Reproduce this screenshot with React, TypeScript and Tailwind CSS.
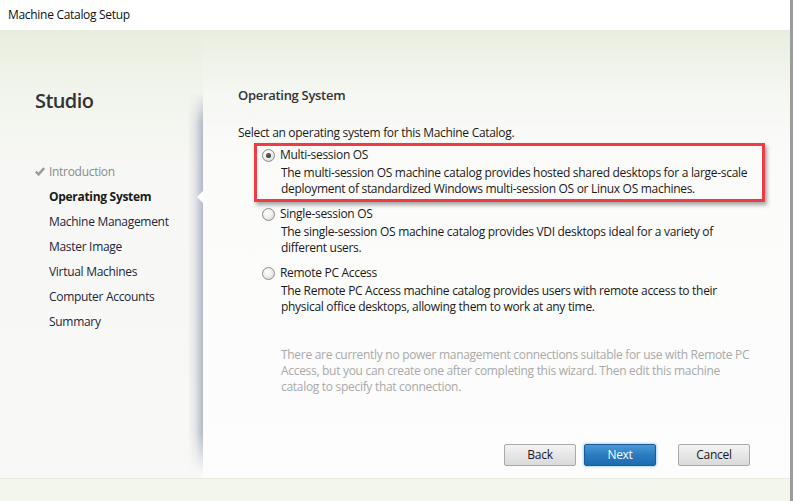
import React from "react";

const font = { fontFamily: '"Open Sans", "Noto Sans", sans-serif', letterSpacing: "-0.3px" };

function Radio({ checked }: { checked?: boolean }) {
  return (
    <span className="flex h-[13px] w-[13px] shrink-0 items-center justify-center rounded-full border border-[#8c8c8c] bg-[radial-gradient(circle_at_40%_35%,#ffffff_0%,#f0f0f0_45%,#cfcfcf_100%)]">
      {checked && (
        <span className="h-[5px] w-[5px] rounded-full bg-[radial-gradient(circle_at_40%_35%,#6a6a6a,#1e1e1e)]" />
      )}
    </span>
  );
}

function Option({
  title,
  lines,
  checked,
  children,
}: {
  title: string;
  lines: string[];
  checked?: boolean;
  children?: React.ReactNode;
}) {
  return (
    <div className="relative ml-[24px]">
      {children}
      <div className="flex h-[16px] items-center gap-[5px]">
        <Radio checked={checked} />
        <span className="whitespace-nowrap text-[12px] leading-[16px] text-[#1a1a1a]">{title}</span>
      </div>
      <div className="mt-[2px] whitespace-nowrap pl-[19px] text-[12px] leading-[16px] text-[#1a1a1a]">
        {lines.map((l) => (
          <div key={l}>{l}</div>
        ))}
      </div>
    </div>
  );
}

function Btn({ label, primary }: { label: string; primary?: boolean }) {
  return primary ? (
    <button className="flex h-[22px] w-[72px] items-center justify-center rounded-[2px] border border-[#1c5c96] bg-[linear-gradient(to_bottom,#4a9ad8,#2a7bc0_50%,#1d6cb0)] text-[12px] text-white shadow-[0_0_3px_#6aaee6]">
      {label}
    </button>
  ) : (
    <button className="flex h-[22px] w-[72px] items-center justify-center rounded-[2px] border border-[#a9a9a9] bg-[linear-gradient(to_bottom,#f4f4f4,#e6e6e6_50%,#dadada)] text-[12px] text-[#1a1a1a]">
      {label}
    </button>
  );
}

export default function App() {
  const steps = [
    "Operating System",
    "Machine Management",
    "Master Image",
    "Virtual Machines",
    "Computer Accounts",
    "Summary",
  ];
  return (
    <div
      className="flex h-[501px] w-[793px] flex-col overflow-hidden border-r-[3px] border-[#9c9c9c] bg-white"
      style={font}
    >
      <div className="flex h-[30px] shrink-0 items-center bg-white pl-[8px] text-[12px] text-[#111]">
        Machine Catalog Setup
      </div>
      <div className="flex flex-1 flex-col bg-[linear-gradient(to_bottom,#e8eedf_0px,#f1f4ec_60px,#f7f8f5_140px,#f8f9f7_100%)]">
        <div className="flex h-[448px]">
          {/* sidebar */}
          <div className="flex w-[203px] shrink-0">
            <div className="w-[188px] pl-[35px] pt-[58px]">
              <div className="text-[20px] font-semibold leading-[26px] tracking-[-0.6px] text-[#333]">Studio</div>
              <div className="ml-[14px] mt-[45px] flex flex-col">
                <div className="-ml-[14px] flex h-[25px] items-center gap-[4px] text-[12px] text-[#8a8a8a]">
                  <svg width="10" height="9" viewBox="0 0 10 9">
                    <path d="M0.8 4.6 L3.6 7.4 L9.2 1" stroke="#9a9a9a" strokeWidth="2.4" fill="none" />
                  </svg>
                  Introduction
                </div>
                {steps.map((s, i) => (
                  <div
                    key={s}
                    className={`flex h-[25px] items-center whitespace-nowrap text-[12px] ${
                      i === 0 ? "font-bold text-[#1a1a1a]" : "text-[#24243a]"
                    }`}
                  >
                    {s}
                  </div>
                ))}
              </div>
            </div>
            <div className="relative w-[15px] pb-[5px] pt-[63px]">
              <div className="h-full w-full bg-[linear-gradient(to_right,rgba(180,185,200,0),rgba(180,185,200,0.35)_50%,#b3b8c6)] [mask-image:linear-gradient(to_bottom,transparent,black_30px,black_calc(100%-40px),transparent)]" />
              <div className="absolute right-0 top-[161px] h-0 w-0 border-y-[6px] border-r-[6px] border-y-transparent border-r-white" />
            </div>
          </div>
          {/* main */}
          <div className="flex flex-1 flex-col bg-[linear-gradient(to_bottom,rgba(255,255,255,0)_0px,rgba(255,255,255,0.5)_120px,rgba(255,255,255,0.6)_100%)] pb-[12px] pl-[35px] pr-[40px] pt-[57px]">
            <div className="text-[13px] font-semibold leading-[16px] text-[#333]">Operating System</div>
            <div className="mt-[22px] whitespace-nowrap text-[12px] leading-[16px] text-[#1a1a1a]">
              Select an operating system for this Machine Catalog.
            </div>
            <div className="mt-[6px]">
              <Option
                checked
                title="Multi-session OS"
                lines={[
                  "The multi-session OS machine catalog provides hosted shared desktops for a large-scale",
                  "deployment of standardized Windows multi-session OS or Linux OS machines.",
                ]}
              >
                <div className="pointer-events-none absolute -left-[8px] -top-[4px] h-[59px] w-[511px] border-[3px] border-[#ee3b45] shadow-[2px_3px_4px_rgba(0,0,0,0.35)]" />
              </Option>
            </div>
            <div className="mt-[9px]">
              <Option
                title="Single-session OS"
                lines={[
                  "The single-session OS machine catalog provides VDI desktops ideal for a variety of",
                  "different users.",
                ]}
              />
            </div>
            <div className="mt-[9px]">
              <Option
                title="Remote PC Access"
                lines={[
                  "The Remote PC Access machine catalog provides users with remote access to their",
                  "physical office desktops, allowing them to work at any time.",
                ]}
              />
            </div>
            <div className="ml-[43px] mt-[32px] whitespace-nowrap text-[12px] leading-[16px] text-[#a9a9a9]">
              <div>There are currently no power management connections suitable for use with Remote PC</div>
              <div>Access, but you can create one after completing this wizard. Then edit this machine</div>
              <div>catalog to specify that connection.</div>
            </div>
            <div className="mt-auto flex justify-end">
              <Btn label="Back" />
              <div className="w-[8px]" />
              <Btn label="Next" primary />
              <div className="w-[22px]" />
              <Btn label="Cancel" />
            </div>
          </div>
        </div>
        <div className="flex-1 border-t border-[#e6eadf] bg-[#f2f6ec]" />
      </div>
    </div>
  );
}
